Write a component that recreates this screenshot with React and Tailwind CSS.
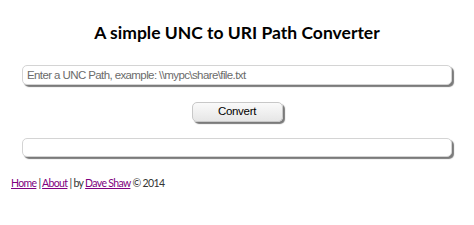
import React from 'react'

const App = () => {
  return (
    <div className="w-[474px] h-[225px] bg-white px-[11px] pt-[21px]" style={{ fontFamily: 'Lato, sans-serif' }}>
      <h1 className="text-center text-[17.5px] leading-[24px] font-bold text-black font-['Lato',sans-serif]">
        A simple UNC to URI Path Converter
      </h1>

      <div className="mt-[16px] px-[11px]">
        <input
          type="text"
          placeholder="Enter a UNC Path, example: \\mypc\share\file.txt"
          className="w-full h-[20px] rounded-[5px] border border-[#d4d4d4] bg-white px-[4px] text-[11.5px] tracking-[-0.6px] font-['Liberation_Sans',Arial,sans-serif] placeholder:text-[#6b6b6b] shadow-[2px_2px_1px_#7a7a7a] outline-none"
        />
      </div>

      <div className="mt-[17px] flex justify-center">
        <button className="w-[91px] h-[20px] rounded-[5px] border border-[#c8c8c8] bg-gradient-to-b from-[#fafafa] to-[#e6e6e6] text-[11.5px] tracking-[-0.3px] text-black font-['Liberation_Sans',Arial,sans-serif] shadow-[2px_2px_1px_#7a7a7a]">
          Convert
        </button>
      </div>

      <div className="mt-[16px] px-[11px]">
        <div className="w-full h-[19px] rounded-[5px] border border-[#d4d4d4] bg-white shadow-[2px_2px_1px_#7a7a7a]" />
      </div>

      <p className="mt-[19px] text-[10.5px] tracking-[-0.65px] text-[#333] font-['Lato',sans-serif]">
        <a href="#" className="text-[#800080] underline">Home</a> | <a href="#" className="text-[#800080] underline">About</a> | by{' '}
        <a href="#" className="text-[#800080] underline">Dave Shaw</a> © 2014
      </p>
    </div>
  )
}

export default App
